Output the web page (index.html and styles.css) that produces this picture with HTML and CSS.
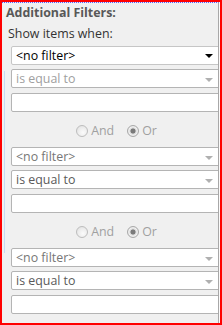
FILE: index.html
```html
<!DOCTYPE html>
<html>
<head>
<meta charset="utf-8">
<link rel="stylesheet" href="styles.css">
</head>
<body>
<div class="frame">
  <div class="panel">
    <div class="heading">Additional Filters:</div>
    <div class="label">Show items when:</div>

    <div class="group first">
      <div class="select active"><span>&lt;no filter&gt;</span><i class="arrow"></i></div>
      <div class="select disabled gap4"><span>is equal to</span><i class="arrow"></i></div>
      <div class="input gap5"></div>
    </div>

    <div class="radios">
      <span class="radio"></span><span class="rlabel">And</span>
      <span class="radio checked"></span><span class="rlabel">Or</span>
    </div>

    <div class="group">
      <div class="select dim"><span>&lt;no filter&gt;</span><i class="arrow"></i></div>
      <div class="select dark gap4"><span>is equal to</span><i class="arrow"></i></div>
      <div class="input gap5"></div>
    </div>

    <div class="radios">
      <span class="radio"></span><span class="rlabel">And</span>
      <span class="radio checked"></span><span class="rlabel">Or</span>
    </div>

    <div class="group">
      <div class="select dim"><span>&lt;no filter&gt;</span><i class="arrow"></i></div>
      <div class="select dark gap4"><span>is equal to</span><i class="arrow"></i></div>
      <div class="input gap5"></div>
    </div>
  </div>
</div>
</body>
</html>
```

FILE: styles.css
```css
html, body {
  margin: 0;
  padding: 0;
  background: #ffffff;
}

.frame {
  width: 222px;
  height: 325px;
  box-sizing: border-box;
  border: 2px solid #ff0000;
  background: #fafafa;
  overflow: hidden;
}

.panel {
  height: 100%;
  margin-right: 1px;
  box-sizing: border-box;
  border-top: 1px dotted #5a5aff;
  border-right: 1px solid #a8a8a8;
  background: linear-gradient(#c4dcf2, #c4dcf2) 2px 68px / 1px 182px no-repeat, #f0f0f0;
  overflow: hidden;
  font-family: "Open Sans", "Noto Sans", sans-serif;
  font-size: 12.4px;
}

.heading {
  margin: 2px 0 0 4px;
  line-height: 16px;
  font-weight: bold;
  color: #585858;
}

.label {
  margin: 5px 0 0 6px;
  line-height: 16px;
  color: #333333;
}

.group {
  margin-left: 9px;
  width: 211px;
}

.group.first {
  margin-top: 4px;
}

.select,
.input {
  width: 211px;
  height: 19px;
  box-sizing: border-box;
  border: 1px solid #b4b4b4;
  border-radius: 2px;
  background: #ffffff;
}

.select {
  display: flex;
  align-items: center;
  justify-content: space-between;
  padding: 0 8px 0 4px;
  line-height: 17px;
}

.gap4 { margin-top: 4px; }
.gap5 { margin-top: 5px; }

.select.active { color: #000000; border-color: #c6c6c6; }
.select.disabled { color: #a0a0a0; }
.select.dim { color: #767676; }
.select.dark { color: #5a5a5a; }

.arrow {
  width: 0;
  height: 0;
  margin-top: 2px;
  border-left: 4px solid transparent;
  border-right: 4px solid transparent;
  border-top: 4px solid #b0b0b0;
}

.select.active .arrow {
  border-top-color: #000000;
  margin-top: 1px;
}

.radios {
  margin-left: 9px;
  width: 211px;
  height: 35px;
  box-sizing: border-box;
  padding-top: 13px;
  display: flex;
  justify-content: center;
  align-items: flex-start;
  color: #a0a0a0;
  line-height: 12px;
}

.radio {
  width: 12px;
  height: 12px;
  box-sizing: border-box;
  border-radius: 50%;
  border: 1px solid #bdbdbd;
  background: radial-gradient(circle at 60% 65%, #fbfbfb 0%, #ececec 55%, #dcdcdc 100%);
  margin-right: 3px;
}

.radio.checked {
  border-color: #a9a9a9;
  background: radial-gradient(circle, #7a7a7a 0, #7a7a7a 2.2px, #d2d2d2 2.8px, #f3f3f3 4.2px, #e4e4e4 5px);
}

.rlabel {
  margin-right: 13px;
}

.rlabel:last-child {
  margin-right: 0;
}
```
